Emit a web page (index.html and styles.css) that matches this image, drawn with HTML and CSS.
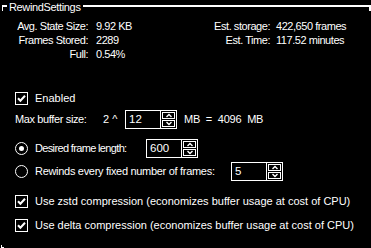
FILE: index.html
```html
<!DOCTYPE html>
<html>
<head>
<meta charset="utf-8">
<link rel="stylesheet" href="styles.css">
</head>
<body>
<div class="group">
  <div class="legend">RewindSettings</div>
  <div class="stats">
    <div class="stat-col left">
      <span class="lbl">Avg. State Size:</span><span class="val">9.92 KB</span>
      <span class="lbl">Frames Stored:</span><span class="val">2289</span>
      <span class="lbl">Full:</span><span class="val">0.54%</span>
    </div>
    <div class="stat-col right">
      <span class="lbl">Est. storage:</span><span class="val">422,650 frames</span>
      <span class="lbl">Est. Time:</span><span class="val">117.52 minutes</span>
    </div>
  </div>
  <div class="controls">
    <div class="row r-enabled">
      <span class="check"><svg viewBox="0 0 11 11" width="11" height="11"><path d="M2 5.3 L4.4 7.8 L9 2.8" fill="none" stroke="#fff" stroke-width="2"/></svg></span>
      <span class="txt">Enabled</span>
    </div>
    <div class="row r-buffer">
      <span class="txt lbl-buffer">Max buffer size:</span>
      <span class="txt pow">2 ^</span>
      <span class="spin"><span class="num">12</span><span class="btns"><span class="b"><svg viewBox="0 0 12 7" width="12" height="7"><path d="M3.5 5 L6 2.5 L8.5 5" fill="none" stroke="#fff" stroke-width="1.4"/></svg></span><span class="b"><svg viewBox="0 0 12 7" width="12" height="7"><path d="M3.5 2 L6 4.5 L8.5 2" fill="none" stroke="#fff" stroke-width="1.4"/></svg></span></span></span>
      <span class="txt eq">MB&nbsp; =&nbsp; 4096&nbsp; MB</span>
    </div>
    <div class="row r-desired">
      <span class="radio"><span class="dot"></span></span>
      <span class="txt lbl-desired">Desired frame length:</span>
      <span class="spin"><span class="num">600</span><span class="btns"><span class="b"><svg viewBox="0 0 12 7" width="12" height="7"><path d="M3.5 5 L6 2.5 L8.5 5" fill="none" stroke="#fff" stroke-width="1.4"/></svg></span><span class="b"><svg viewBox="0 0 12 7" width="12" height="7"><path d="M3.5 2 L6 4.5 L8.5 2" fill="none" stroke="#fff" stroke-width="1.4"/></svg></span></span></span>
    </div>
    <div class="row r-fixed">
      <span class="radio"></span>
      <span class="txt lbl-fixed">Rewinds every fixed number of frames:</span>
      <span class="spin"><span class="num">5</span><span class="btns"><span class="b"><svg viewBox="0 0 12 7" width="12" height="7"><path d="M3.5 5 L6 2.5 L8.5 5" fill="none" stroke="#fff" stroke-width="1.4"/></svg></span><span class="b"><svg viewBox="0 0 12 7" width="12" height="7"><path d="M3.5 2 L6 4.5 L8.5 2" fill="none" stroke="#fff" stroke-width="1.4"/></svg></span></span></span>
    </div>
    <div class="row r-zstd">
      <span class="check"><svg viewBox="0 0 11 11" width="11" height="11"><path d="M2 5.3 L4.4 7.8 L9 2.8" fill="none" stroke="#fff" stroke-width="2"/></svg></span>
      <span class="txt">Use zstd compression (economizes buffer usage at cost of CPU)</span>
    </div>
    <div class="row r-delta">
      <span class="check"><svg viewBox="0 0 11 11" width="11" height="11"><path d="M2 5.3 L4.4 7.8 L9 2.8" fill="none" stroke="#fff" stroke-width="2"/></svg></span>
      <span class="txt">Use delta compression (economizes buffer usage at cost of CPU)</span>
    </div>
  </div>
  <span class="corner-bl"></span>
</div>
</body>
</html>
```
FILE: styles.css
```css
html, body {
  margin: 0;
  padding: 0;
  background: #000;
}
body {
  width: 371px;
  height: 248px;
  overflow: hidden;
  color: #fff;
  font-family: "Liberation Sans", Arial, sans-serif;
  font-size: 11px;
  line-height: 14px;
}
.group {
  position: relative;
  margin: 5px 0 0 2px;
  width: 369px;
  height: 243px;
  border-top: 2px solid #fff;
  box-sizing: border-box;
}
/* small corner stubs of the frame */
.group::before {
  content: "";
  position: absolute;
  left: 0;
  top: 0;
  width: 1px;
  height: 4px;
  background: #fff;
}
.group::after {
  content: "";
  position: absolute;
  right: 0;
  top: 0;
  width: 2px;
  height: 4px;
  background: #fff;
}
.corner-bl {
  position: absolute;
  left: -1px;
  bottom: 0;
  width: 3px;
  height: 3px;
  border-left: 1px solid #fff;
  border-bottom: 1px solid #fff;
  box-sizing: border-box;
}
.legend {
  margin: -7px 0 0 5px;
  padding: 0 2px;
  width: max-content;
  background: #000;
  height: 14px;
  letter-spacing: -0.35px;
}
.stats {
  display: flex;
  margin-top: 5px;
  letter-spacing: -0.45px;
}
.stat-col {
  display: grid;
  align-content: start;
}
.stat-col .lbl { text-align: right; }
.stat-col.left {
  grid-template-columns: 86px auto;
  column-gap: 8px;
  width: 160px;
}
.stat-col.right {
  grid-template-columns: 60px auto;
  column-gap: 6px;
  margin-left: 48px;
}
.controls {
  display: flex;
  flex-direction: column;
  margin-top: 27px;
  padding-left: 13px;
}
.row {
  display: flex;
  align-items: center;
  height: 22px;
}
.txt { white-space: nowrap; }
.check {
  width: 13px;
  height: 13px;
  box-sizing: border-box;
  border: 1px solid #fff;
  margin-right: 7px;
  display: flex;
  align-items: center;
  justify-content: center;
  flex: none;
}
.check svg { display: block; flex: none; }
.radio {
  width: 13px;
  height: 13px;
  box-sizing: border-box;
  border: 1px solid #fff;
  border-radius: 50%;
  margin-right: 7px;
  display: flex;
  align-items: center;
  justify-content: center;
  flex: none;
}
.radio .dot {
  width: 5px;
  height: 5px;
  border-radius: 50%;
  background: #fff;
}
.lbl-buffer { width: 88px; letter-spacing: -0.37px; }
.pow { width: 22px; }
.lbl-desired { width: 111px; letter-spacing: -0.65px; }
.lbl-fixed { width: 196px; letter-spacing: -0.3px; }
.eq { margin-left: 7px; letter-spacing: -0.2px; }
.spin {
  display: flex;
  width: 52px;
  height: 19px;
  box-sizing: border-box;
  border: 1px solid #fff;
  flex: none;
}
.spin .num {
  flex: 1;
  padding-left: 3px;
  font-size: 11.5px;
  line-height: 17px;
}
.spin .btns {
  display: flex;
  flex-direction: column;
  width: 16px;
  border-left: 1px solid #fff;
  padding: 1px;
  box-sizing: border-box;
  gap: 1px;
}
.spin .b {
  flex: 1;
  border: 1px solid #fff;
  display: flex;
  align-items: center;
  justify-content: center;
  overflow: hidden;
}
.spin .b svg { display: block; flex: none; }
.r-enabled { height: 20px; }
.r-desired { margin-top: 7px; }
.r-fixed { margin-top: 1px; }
.r-zstd { margin-top: 9px; height: 20px; }
.r-delta { margin-top: 4px; height: 20px; }
```
